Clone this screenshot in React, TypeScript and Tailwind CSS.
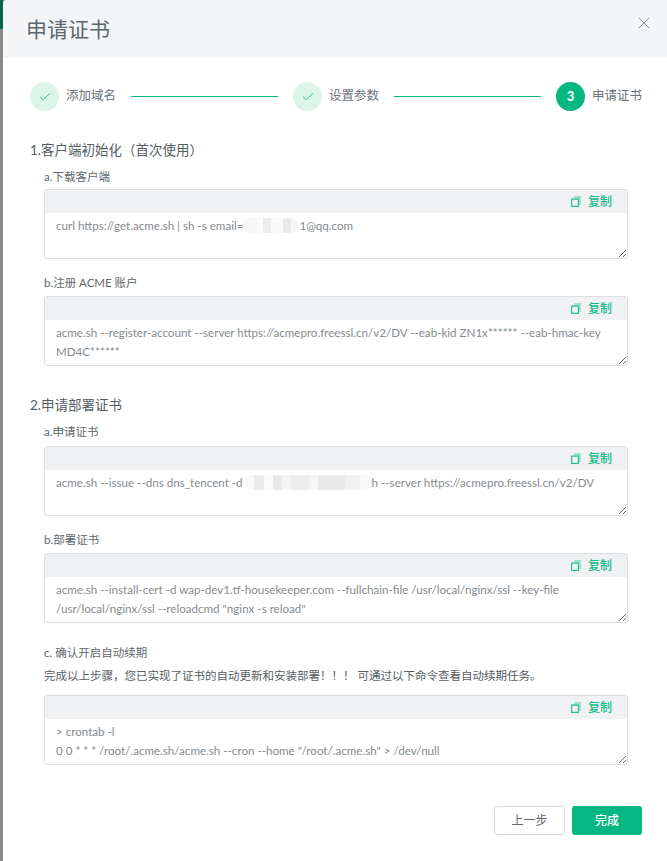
import { Check, X } from "lucide-react";
import type { ReactNode } from "react";

const FONT = 'font-["Lato","Noto_Sans_CJK_SC",sans-serif]';

// redacted part of the command, blotchy grey blocks
function Blur({ blocks }: { blocks: [number, string][] }) {
  return (
    <span className="inline-flex h-[15px] align-[-3px] overflow-hidden rounded-[6px]">
      {blocks.map(([w, color], i) => (
        <span key={i} className="h-full" style={{ width: w, background: color }} />
      ))}
    </span>
  );
}

function Step({ label, num }: { label: string; num?: number }) {
  return (
    <div className="flex items-center gap-[7px]">
      {num ? (
        <div className="flex h-[29px] w-[29px] items-center justify-center rounded-full bg-[#06b782] text-[13px] font-bold text-white">{num}</div>
      ) : (
        <div className="flex h-[29px] w-[29px] items-center justify-center rounded-full bg-[#dcf5e9] text-[#13b985]">
          <Check size={14} strokeWidth={1.5} />
        </div>
      )}
      <span className="text-[12.5px] text-[#6b7479]">{label}</span>
    </div>
  );
}

function CopyIcon() {
  return (
    <svg viewBox="0 0 10 11" className="h-[11px] w-[10px]" fill="none">
      <path d="M3 0h7v9H8V3H3z" fill="#9be3c9" />
      <path d="M.6 3.1h6.8v7.3H.6z" stroke="#27c08f" strokeWidth="1.2" />
    </svg>
  );
}

function CodeBox({ children, h = "h-[45px]" }: { children: ReactNode; h?: string }) {
  return (
    <div className="ml-[14px] w-[584px] overflow-hidden rounded-[3px] border border-[#dcdfe2] text-[#858b8f]">
      <div className="flex h-[23px] items-center justify-end gap-[8px] bg-[#f0f1f3] pr-[15px] text-[12px] font-medium text-[#17ba88]">
        <span className="mr-[-1px]">
          <CopyIcon />
        </span>
        <span>复制</span>
      </div>
      <div className={`${h} resize-y overflow-auto px-[11px] pt-[3px] text-[11.6px] leading-[19px]`}>{children}</div>
    </div>
  );
}

function Sub({ children, className = "" }: { children: ReactNode; className?: string }) {
  return <div className={`ml-[14px] text-[11.5px] leading-[16px] text-[#5f686d] ${className}`}>{children}</div>;
}

function Heading({ children, className = "" }: { children: ReactNode; className?: string }) {
  return <div className={`text-[13.5px] leading-[18px] text-[#555e63] ${className}`}>{children}</div>;
}

export default function App() {
  return (
    <div className={`flex h-[861px] w-[667px] overflow-hidden bg-[#8a8a8a] ${FONT}`}>
      <div className="h-[29px] w-[3px] shrink-0 bg-[#07664a]" />
      <div className="flex h-full flex-1 flex-col overflow-hidden rounded-tl-[4px] bg-white">
        <div className="flex h-[57px] shrink-0 items-center justify-between bg-[#f4f5f7] pl-[23px] pr-[13px]">
          <h1 className="text-[21px] font-normal text-[#5d676d]">申请证书</h1>
          <X size={20} strokeWidth={1.2} className="mb-[11px] text-[#8b9093]" />
        </div>

        <div className="flex h-[76px] shrink-0 items-center pl-[27px] pt-[3px] pr-[25px]">
          <Step label="添加域名" />
          <div className="mx-[15px] h-px flex-1 bg-[#06b782]" />
          <Step label="设置参数" />
          <div className="mx-[15px] h-px flex-1 bg-[#06b782]" />
          <Step label="申请证书" num={3} />
        </div>

        <div className="pl-[27px]">
          <Heading className="mt-[8px]">1.客户端初始化（首次使用）</Heading>
          <Sub className="mt-[10px] mb-[4px]">a.下载客户端</Sub>
          <CodeBox>
            curl https://get.acme.sh | sh -s email=
            <Blur blocks={[[14, "#f6f6f6"], [6, "#fafafa"], [8, "#ececec"], [12, "#f8f8f8"], [8, "#e9e9e9"], [8, "#f6f6f6"]]} />
            1@qq.com
          </CodeBox>
          <Sub className="mt-[16px] mb-[5px]">b.注册 ACME 账户</Sub>
          <CodeBox>
            <div className="whitespace-nowrap">acme.sh --register-account --server https://acmepro.freessl.cn/v2/DV --eab-kid ZN1x****** --eab-hmac-key</div>
            <div>MD4C******</div>
          </CodeBox>
          <Heading className="mt-[30px]">2.申请部署证书</Heading>
          <Sub className="mt-[10px] mb-[6px]">a.申请证书</Sub>
          <CodeBox>
            acme.sh --issue --dns dns_tencent -d{" "}
            <Blur blocks={[[8, "#f8f8f8"], [10, "#ebebeb"], [9, "#fafafa"], [9, "#e9e9e9"], [9, "#f5f5f5"], [18, "#ededed"], [9, "#f6f6f6"], [27, "#e9e9e9"], [15, "#f1f1f1"], [12, "#f8f8f8"]]} />
            h --server https://acmepro.freessl.cn/v2/DV
          </CodeBox>
          <Sub className="mt-[16px] mb-[5px]">b.部署证书</Sub>
          <CodeBox>
            <div className="whitespace-nowrap">acme.sh --install-cert -d wap-dev1.tf-housekeeper.com --fullchain-file /usr/local/nginx/ssl --key-file</div>
            <div>/usr/local/nginx/ssl --reloadcmd "nginx -s reload"</div>
          </CodeBox>
          <Sub className="mt-[22px]">c. 确认开启自动续期</Sub>
          <Sub className="mt-[7px] mb-[11px] text-[#555e63]">完成以上步骤，您已实现了证书的自动更新和安装部署！！！ 可通过以下命令查看自动续期任务。</Sub>
          <CodeBox>
            <div>&gt; crontab -l</div>
            <div>0 0 * * * /root/.acme.sh/acme.sh --cron --home "/root/.acme.sh" &gt; /dev/null</div>
          </CodeBox>
        </div>

        <div className="mt-[41px] flex justify-end gap-[7px] pr-[25px]">
          <button className="h-[29px] w-[71px] rounded-[3px] border border-[#d7dadc] bg-white text-[12px] text-[#5d676d]">上一步</button>
          <button className="h-[29px] w-[70px] rounded-[3px] bg-[#06b782] text-[12px] font-medium text-white">完成</button>
        </div>
      </div>
    </div>
  );
}
